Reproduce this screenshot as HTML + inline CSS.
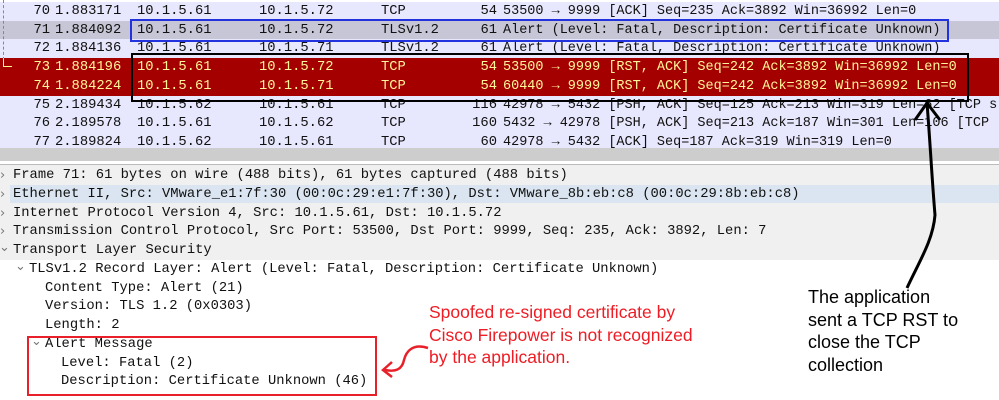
<!DOCTYPE html>
<html><head><meta charset="utf-8"><style>
body{margin:0;width:999px;height:400px;overflow:hidden;background:#fff;position:relative;font-family:"Liberation Mono",monospace;font-size:13.8px}
.r{position:absolute;left:0;width:999px;height:19px;line-height:19px;background:#e7e7fd;color:#111;white-space:pre;overflow:hidden}
.r span{position:absolute;top:0}
.sel{background:#c6c6d6}
.red{background:#a40000;color:#fff59a}
.d{position:absolute;height:19px;line-height:19px;white-space:pre;color:#111}
.ar{position:absolute;color:#777;font-family:"DejaVu Sans",sans-serif;font-size:13px;height:19px;line-height:19px}
.a{font-family:"Liberation Sans",sans-serif;position:absolute;white-space:pre}
</style></head><body>
<div id="rows"></div>
<div style="position:absolute;left:0;top:148px;width:999px;height:13px;background:#cdcdcd"></div>
<div style="position:absolute;left:0;top:161px;width:999px;height:3px;background:#fff;border-bottom:1px solid #bbb"></div>
<div style="position:absolute;left:0;top:165px;width:999px;height:95px;background:#f0f0f0"></div>
<div style="position:absolute;left:10px;top:185px;width:989px;height:18px;background:#dae5f1"></div>
<div class="ar" style="left:0px;top:166px">›</div><div class="d" style="left:13px;top:166px">Frame 71: 61 bytes on wire (488 bits), 61 bytes captured (488 bits)</div>
<div class="ar" style="left:0px;top:185px">›</div><div class="d" style="left:13px;top:185px">Ethernet II, Src: VMware_e1:7f:30 (00:0c:29:e1:7f:30), Dst: VMware_8b:eb:c8 (00:0c:29:8b:eb:c8)</div>
<div class="ar" style="left:0px;top:204px">›</div><div class="d" style="left:13px;top:204px">Internet Protocol Version 4, Src: 10.1.5.61, Dst: 10.1.5.72</div>
<div class="ar" style="left:0px;top:222px">›</div><div class="d" style="left:13px;top:222px">Transmission Control Protocol, Src Port: 53500, Dst Port: 9999, Seq: 235, Ack: 3892, Len: 7</div>
<div class="ar" style="left:-1px;top:238px">⌄</div><div class="d" style="left:13px;top:241px">Transport Layer Security</div>
<div class="ar" style="left:15px;top:257px">⌄</div><div class="d" style="left:29px;top:260px">TLSv1.2 Record Layer: Alert (Level: Fatal, Description: Certificate Unknown)</div>
<div class="d" style="left:45px;top:279px">Content Type: Alert (21)</div>
<div class="d" style="left:45px;top:297px">Version: TLS 1.2 (0x0303)</div>
<div class="d" style="left:45px;top:316px">Length: 2</div>
<div class="ar" style="left:31px;top:332px">⌄</div><div class="d" style="left:45px;top:335px">Alert Message</div>
<div class="d" style="left:61px;top:354px">Level: Fatal (2)</div>
<div class="d" style="left:61px;top:372px">Description: Certificate Unknown (46)</div>
<div style="position:absolute;left:27px;top:336px;width:346px;height:56px;border:2px solid #e8202a"></div>
<div style="position:absolute;left:130px;top:19px;width:815px;height:19px;border:2px solid #2233dd"></div>
<div style="position:absolute;left:131px;top:53px;width:834px;height:45px;border:2px solid #000"></div>
<div class="a" style="left:429px;top:301px;font-size:17.5px;line-height:22.5px;color:#ee1c24">Spoofed re-signed certificate by
Cisco Firepower is not recognized
by the application.</div>
<div class="a" style="left:808px;top:286px;font-size:18px;line-height:22.5px;color:#000">The application
sent a TCP RST to
close the TCP
collection</div>
<svg style="position:absolute;left:0;top:0" width="999" height="400">
<path d="M927 103 C930 140 932 180 935 215 C933 240 920 260 907 288" stroke="#000" stroke-width="3" fill="none"/>
<path d="M915 120 L927 103 L940 120" stroke="#000" stroke-width="3" fill="none"/>
<path d="M428 348 C412 343 406 352 404 360 C402 370 395 372 385 370" stroke="#e8202a" stroke-width="2.5" fill="none"/>
<path d="M392 362 L383 370 L392 377" stroke="#e8202a" stroke-width="2.5" fill="none"/>
</svg>
<script>
var R=[["70","1.883171","10.1.5.61","10.1.5.72","TCP","54","53500 → 9999 [ACK] Seq=235 Ack=3892 Win=36992 Len=0",""],
["71","1.884092","10.1.5.61","10.1.5.72","TLSv1.2","61","Alert (Level: Fatal, Description: Certificate Unknown)","sel"],
["72","1.884136","10.1.5.61","10.1.5.71","TLSv1.2","61","Alert (Level: Fatal, Description: Certificate Unknown)",""],
["73","1.884196","10.1.5.61","10.1.5.72","TCP","54","53500 → 9999 [RST, ACK] Seq=242 Ack=3892 Win=36992 Len=0","red"],
["74","1.884224","10.1.5.61","10.1.5.71","TCP","54","60440 → 9999 [RST, ACK] Seq=242 Ack=3892 Win=36992 Len=0","red"],
["75","2.189434","10.1.5.62","10.1.5.61","TCP","116","42978 → 5432 [PSH, ACK] Seq=125 Ack=213 Win=319 Len=62 [TCP s",""],
["76","2.189578","10.1.5.61","10.1.5.62","TCP","160","5432 → 42978 [PSH, ACK] Seq=213 Ack=187 Win=301 Len=106 [TCP",""],
["77","2.189824","10.1.5.62","10.1.5.61","TCP","60","42978 → 5432 [ACK] Seq=187 Ack=319 Win=319 Len=0",""]];
var h="",tops=[2,21,39,58,77,96,114,133];
R.forEach(function(r,i){h+='<div class="r '+r[7]+'" style="top:'+tops[i]+'px;height:'+(i==7?15:19)+'px"><span style="right:949px">'+r[0]+'</span><span style="left:55px">'+r[1]+'</span><span style="left:137px">'+r[2]+'</span><span style="left:259px">'+r[3]+'</span><span style="left:381px">'+r[4]+'</span><span style="right:502px">'+r[5]+'</span><span style="left:503px;font-size:13.5px">'+r[6]+'</span></div>'});
h+='<div style="position:absolute;left:3px;top:0;width:1px;height:60px;border-left:1px dashed #888"></div><div style="position:absolute;left:3px;top:58px;width:8px;height:8px;border-left:1px solid #fff59a;border-bottom:1px solid #fff59a"></div>';
document.getElementById("rows").innerHTML=h;
</script>
</body></html>
